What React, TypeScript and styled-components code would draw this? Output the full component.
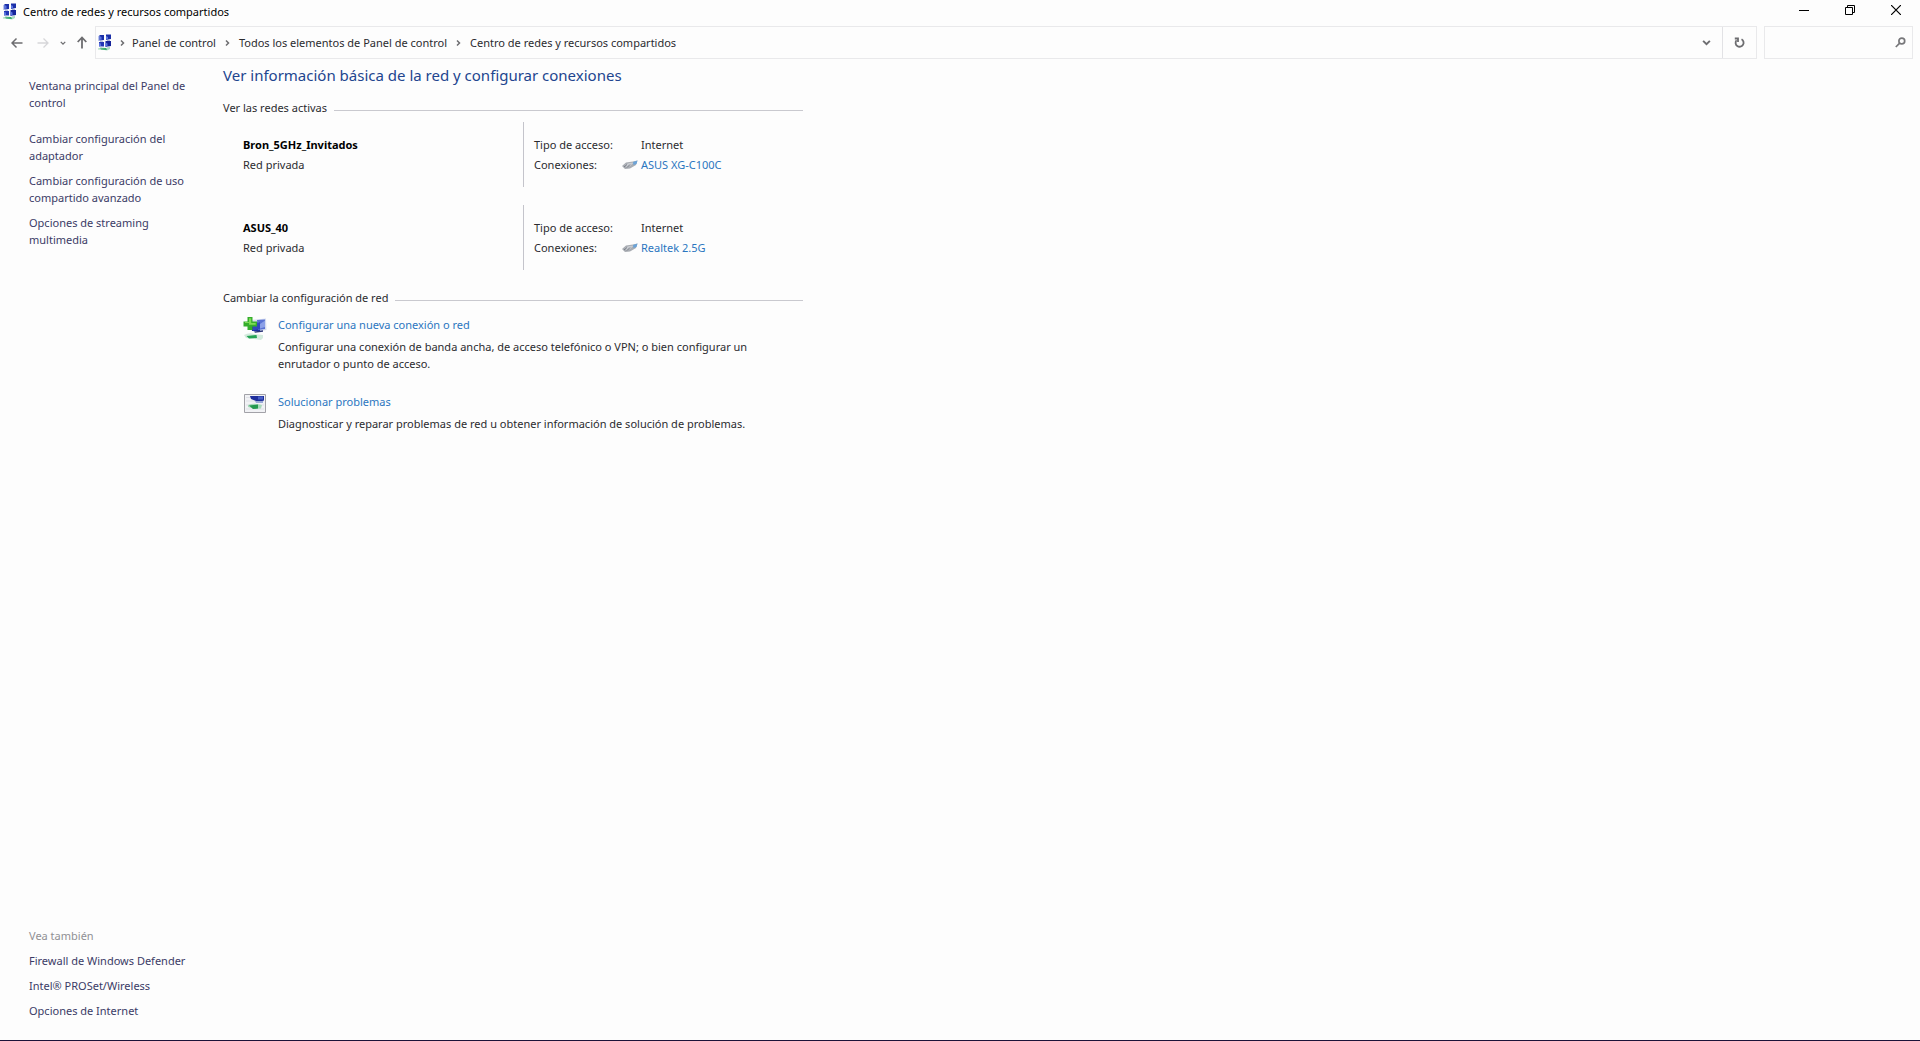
import React from "react";
import styled, { createGlobalStyle } from "styled-components";

const GlobalStyle = createGlobalStyle`
  * { box-sizing: border-box; }
  body {
    margin: 0;
    background: #fdfdfd;
    color: #2b2b2f;
    font: 11px/17px "Noto Sans", "Open Sans", sans-serif;
  }
  h1, h2, h3, p, ul, ol, dl, dd { margin: 0; padding: 0; }
  ul, ol { list-style: none; }
  svg { display: block; flex: none; }
`;

const Window = styled.div`
  display: flex;
  flex-direction: column;
  min-height: 100vh;
`;

const TitleBar = styled.header`
  display: flex;
  align-items: center;
  gap: 5px;
  height: 22px;
  padding: 0 1px 0 2px;
  color: #000;
`;

const Title = styled.span`
  flex: 1;
`;

const PlainButton = styled.button<{ $width: number; $color?: string }>`
  display: flex;
  align-items: center;
  justify-content: center;
  flex: none;
  width: ${(p) => p.$width}px;
  height: 100%;
  padding: 0;
  border: 0;
  background: none;
  color: ${(p) => p.$color ?? "#6d6d70"};
`;

const CaptionButtons = styled.div`
  display: flex;
  height: 20px;
  align-self: flex-start;
`;

const NavBar = styled.nav`
  display: flex;
  align-items: stretch;
  gap: 7px;
  height: 33px;
  margin-top: 4px;
  padding-right: 7px;
`;

const NavButtons = styled.div`
  display: flex;
  padding-left: 4px;
  width: 88px;
`;

const AddressBar = styled.div`
  display: flex;
  align-items: center;
  flex: 1;
  border: 1px solid #e9e9eb;
  padding-left: 1px;
`;

const Crumbs = styled.ol`
  display: flex;
  align-items: center;
  flex: 1;
`;

const Crumb = styled.li`
  display: flex;
  align-items: center;

  svg { margin: 0 8px; }
  &:first-child svg { margin: 0 6px; }
`;

const CrumbLink = styled.a`
  color: inherit;
  text-decoration: none;
`;

const RefreshSlot = styled.div`
  height: 100%;
  border-left: 1px solid #e2e2e5;
`;

const SearchBox = styled.label`
  display: flex;
  align-items: center;
  width: 149px;
  padding-right: 6px;
  border: 1px solid #e9e9eb;
  color: #77777a;
`;

const SearchInput = styled.input`
  flex: 1;
  min-width: 0;
  border: 0;
  outline: 0;
  background: none;
  font: inherit;
`;

const Body = styled.div`
  display: flex;
  flex: 1;
`;

const Sidebar = styled.aside`
  display: flex;
  flex-direction: column;
  justify-content: space-between;
  width: 223px;
  padding: 18px 26px 21px 29px;
`;

const SideHome = styled.div`
  margin-bottom: 19px;
`;

const SideList = styled.ul`
  display: flex;
  flex-direction: column;
  gap: 8px;
`;

const SideLink = styled.a`
  color: #3b3b66;
  text-decoration: none;
`;

const SeeAlsoTitle = styled.h2`
  margin-bottom: 8px;
  color: #909094;
  font: inherit;
`;

const Main = styled.main`
  width: 580px;
  padding-top: 4px;
`;

const PageTitle = styled.h1`
  color: #22458f;
  font-size: 15px;
  line-height: 24px;
  font-weight: 400;
`;

const Section = styled.section<{ $top: number }>`
  margin-top: ${(p) => p.$top}px;
`;

const SectionTitle = styled.h2`
  display: flex;
  align-items: center;
  gap: 7px;
  font: inherit;

  &::after {
    content: "";
    flex: 1;
    height: 1px;
    margin-top: 5px;
    background: #c9c9cf;
  }
`;

const Network = styled.article`
  display: flex;
  height: 65px;
  margin-top: 18px;
  padding-left: 20px;

  ${SectionTitle} + & { margin-top: 6px; }
`;

const NetworkInfo = styled.div`
  width: 280px;
  padding-top: 13px;
  line-height: 20px;
`;

const NetworkName = styled.h3`
  color: #000;
  font-size: 11px;
  line-height: 20px;
  font-weight: 700;
`;

const Details = styled.dl`
  display: grid;
  grid-template-columns: 88px 1fr;
  grid-auto-rows: 20px;
  padding: 13px 0 0 10px;
  border-left: 1px solid #c4c4cb;
  line-height: 20px;
`;

const Value = styled.dd`
  display: grid;
  grid-template-columns: 19px auto;
  align-items: center;

  > :last-child { grid-column: 2; }
`;

const TaskLink = styled.a`
  color: #2b76c0;
  text-decoration: none;
`;

const Task = styled.article<{ $top: number }>`
  display: flex;
  gap: 11px;
  margin-top: ${(p) => p.$top}px;
  padding-left: 20px;
`;

const TaskText = styled.div`
  display: flex;
  flex-direction: column;
  gap: 5px;
  max-width: 500px;
`;

const BottomEdge = styled.div`
  height: 1px;
  background: #1b1238;
`;

const NetworkIcon = () => (
  <svg width="16" height="17" viewBox="0 0 16 17" aria-hidden="true">
    <path d="M1 2 6 1v5l-5 1z" fill="#b9c4ee" />
    <path d="M2.500 1h4.500v5l-4.500.5z" fill="#1b2fa8" />
    <path d="M9 .5h5V5L9 6z" fill="#1b2fa8" />
    <path d="M2 8h5v4.500H2z" fill="#2336b4" />
    <path d="M8.500 7H14v5l-5.500 1z" fill="#16249a" />
    <path d="M2.500 2l2 1v3l-2-.5zM9 2l2 1v2.500H9zM2 9l2 .5V12H2zM8.500 8.500l2 1v3h-2z" fill="#5a74e0" />
    <path d="M3 7.300h3M10 6.500h3M3 13h2M10 13h3" stroke="#a9b4d6" />
    <path d="M1 14.500q4-1.500 8-.5l4-1v2l-3 1.500q-4-1-9-1z" fill="#a9dcc0" />
    <path d="M3 14.500l6-.5 1 2-6-.5z" fill="#2fa463" />
  </svg>
);

const BackIcon = () => (
  <svg width="12" height="12" viewBox="0 0 12 12" fill="none" stroke="currentColor" strokeWidth="1.500">
    <path d="M11.500 6H1.200M5.500 1.500 1 6l4.500 4.500" />
  </svg>
);

const ForwardIcon = () => (
  <svg width="12" height="12" viewBox="0 0 12 12" fill="none" stroke="currentColor" strokeWidth="1.300">
    <path d="M.5 6h10.300M6.500 1.500 11 6l-4.500 4.500" />
  </svg>
);

const UpIcon = () => (
  <svg width="12" height="13" viewBox="0 0 12 13" fill="none" stroke="currentColor" strokeWidth="1.800">
    <path d="M6 12.500V1.500M1.700 6 6 1.500 10.300 6" />
  </svg>
);

const ChevronDown = ({ size }: { size: number }) => (
  <svg width={size} height={size} viewBox="0 0 8 8" fill="none" stroke="currentColor" strokeWidth="1.700">
    <path d="M1 2.500 4 5.500 7 2.500" />
  </svg>
);

const CrumbArrow = () => (
  <svg width="7" height="8" viewBox="0 0 7 8" fill="none" stroke="#6d6d70" strokeWidth="1.500" aria-hidden="true">
    <path d="M2 1.500 4.500 4 2 6.500" />
  </svg>
);

const RefreshIcon = () => (
  <svg width="11" height="12" viewBox="0 0 11 12" fill="none" stroke="currentColor" strokeWidth="1.800">
    <path d="M7.500 2.200A4 4 0 1 1 2.500 3.200" />
    <path d="M.8 1.500H4V5" />
  </svg>
);

const SearchIcon = () => (
  <svg width="11" height="11" viewBox="0 0 11 11" fill="none" stroke="currentColor" strokeWidth="1.700" aria-hidden="true">
    <circle cx="6.800" cy="4" r="2.900" />
    <path d="M4.700 6.200.8 10" />
  </svg>
);

const MinimizeIcon = () => (
  <svg width="10" height="10" viewBox="0 0 10 10" stroke="currentColor">
    <path d="M0 5.500h10" />
  </svg>
);

const RestoreIcon = () => (
  <svg width="10" height="10" viewBox="0 0 10 10" fill="none" stroke="currentColor">
    <path d="M.5 2.500h7v7h-7zM2.500 2.500v-2h7v7h-2" />
  </svg>
);

const CloseIcon = () => (
  <svg width="10" height="10" viewBox="0 0 10 10" stroke="currentColor" strokeWidth="1.200">
    <path d="M0 0l10 10M10 0 0 10" />
  </svg>
);

const EthernetIcon = () => (
  <svg width="16" height="10" viewBox="0 0 16 10" aria-hidden="true">
    <path d="M0 6 4 2.500 11 1.500l4.500-1L14 5 8 8.500 3 9z" fill="#a9adb3" />
    <path d="M3 5l4-2 5-.5-4 3.500-4 1z" fill="#c9ccd1" />
    <path d="M2 7l3-2.500M5 7.500l3-3" stroke="#777c85" />
    <path d="M11 2l4.500-1.500-1 3.500-3 1z" fill="#6ba3d8" />
  </svg>
);

const NewConnectionIcon = () => (
  <svg width="24" height="25" viewBox="0 0 24 25" aria-hidden="true">
    <path d="M7 4 23 2.500l.5 11.500-13 2z" fill="#d4dbee" />
    <path d="M8 6h9v9H9z" fill="#1d2fa5" />
    <path d="M14 4 22 3.500V13L15 14z" fill="#5871d2" />
    <path d="M10 10l7-4v7l-7 1.500z" fill="#3148bd" />
    <path d="M17 8l5-3.500V11l-5 1.500z" fill="#8ba0e8" />
    <path d="M11 15.500l9-1.200v1.500l-8 1z" fill="#2b3578" />
    <path d="M1 19q5-3 10-1l9 1v3l-2 2q-7-1-15-2z" fill="#d3eadd" />
    <path d="M3.500 20l10-1 .5 3-8 .5z" fill="#25a354" />
    <path d="M4.500 1h5v4.500H14v5H9.500V14h-5v-3.500H.5v-5h4z" fill="#35ad2c" />
    <path d="M6 2.200h2.200V7h4.500v1.800H6V7H2V6h4z" fill="#7fdc55" />
  </svg>
);

const TroubleshootIcon = () => (
  <svg width="24" height="21" viewBox="0 0 24 21" aria-hidden="true">
    <path d="M1.500 1.500h21v18h-21z" fill="#f1f2f5" stroke="#a2a2a8" />
    <path d="M3 4.500h18M3 8h18M3 12h18M3 16h18" stroke="#dfe1e7" />
    <path d="M7 3h14v4.500l-5 1.500-8-3z" fill="#1f2f9c" />
    <path d="M15 3.500h5v3h-5z" fill="#4860c6" />
    <path d="M12 8h8v2h-7z" fill="#9aa9d6" />
    <path d="M5 12q5-2 9-1l5 1-1 3.500-6 .5-7-2z" fill="#a7d9ba" />
    <path d="M6 12.500l9-1v4l-5 .5z" fill="#24994f" />
  </svg>
);

const crumbs = ["Panel de control", "Todos los elementos de Panel de control", "Centro de redes y recursos compartidos"];

const sideTasks = [
  "Cambiar configuración del adaptador",
  "Cambiar configuración de uso compartido avanzado",
  "Opciones de streaming multimedia",
];

const seeAlso = ["Firewall de Windows Defender", "Intel® PROSet/Wireless", "Opciones de Internet"];

const networks = [
  { name: "Bron_5GHz_Invitados", kind: "Red privada", access: "Internet", adapter: "ASUS XG-C100C" },
  { name: "ASUS_40", kind: "Red privada", access: "Internet", adapter: "Realtek 2.5G" },
];

export default function App() {
  return (
    <Window>
      <GlobalStyle />
      <TitleBar>
        <NetworkIcon />
        <Title>Centro de redes y recursos compartidos</Title>
        <CaptionButtons>
          <PlainButton $width={46} $color="#000" aria-label="Minimizar"><MinimizeIcon /></PlainButton>
          <PlainButton $width={46} $color="#000" aria-label="Restaurar"><RestoreIcon /></PlainButton>
          <PlainButton $width={46} $color="#000" aria-label="Cerrar"><CloseIcon /></PlainButton>
        </CaptionButtons>
      </TitleBar>

      <NavBar>
        <NavButtons>
          <PlainButton $width={26} aria-label="Atrás"><BackIcon /></PlainButton>
          <PlainButton $width={26} $color="#d6d6d9" aria-label="Adelante"><ForwardIcon /></PlainButton>
          <PlainButton $width={14} aria-label="Ubicaciones recientes"><ChevronDown size={6} /></PlainButton>
          <PlainButton $width={24} aria-label="Subir"><UpIcon /></PlainButton>
        </NavButtons>
        <AddressBar>
          <NetworkIcon />
          <Crumbs>
            {crumbs.map((label) => (
              <Crumb key={label}>
                <CrumbArrow />
                <CrumbLink href="#">{label}</CrumbLink>
              </Crumb>
            ))}
          </Crumbs>
          <PlainButton $width={32} aria-label="Ubicaciones anteriores"><ChevronDown size={9} /></PlainButton>
          <RefreshSlot>
            <PlainButton $width={33} aria-label="Actualizar"><RefreshIcon /></PlainButton>
          </RefreshSlot>
        </AddressBar>
        <SearchBox>
          <SearchInput type="text" aria-label="Buscar" />
          <SearchIcon />
        </SearchBox>
      </NavBar>

      <Body>
        <Sidebar>
          <div>
            <SideHome><SideLink href="#">Ventana principal del Panel de control</SideLink></SideHome>
            <SideList>
              {sideTasks.map((label) => (
                <li key={label}><SideLink href="#">{label}</SideLink></li>
              ))}
            </SideList>
          </div>
          <div>
            <SeeAlsoTitle>Vea también</SeeAlsoTitle>
            <SideList>
              {seeAlso.map((label) => (
                <li key={label}><SideLink href="#">{label}</SideLink></li>
              ))}
            </SideList>
          </div>
        </Sidebar>

        <Main>
          <PageTitle>Ver información básica de la red y configurar conexiones</PageTitle>

          <Section $top={12}>
            <SectionTitle>Ver las redes activas</SectionTitle>
            {networks.map((n) => (
              <Network key={n.name}>
                <NetworkInfo>
                  <NetworkName>{n.name}</NetworkName>
                  <p>{n.kind}</p>
                </NetworkInfo>
                <Details>
                  <dt>Tipo de acceso:</dt>
                  <Value><span>{n.access}</span></Value>
                  <dt>Conexiones:</dt>
                  <Value><EthernetIcon /><TaskLink href="#">{n.adapter}</TaskLink></Value>
                </Details>
              </Network>
            ))}
          </Section>

          <Section $top={19}>
            <SectionTitle>Cambiar la configuración de red</SectionTitle>
            <Task $top={10}>
              <NewConnectionIcon />
              <TaskText>
                <TaskLink href="#">Configurar una nueva conexión o red</TaskLink>
                <p>
                  Configurar una conexión de banda ancha, de acceso telefónico o VPN; o bien configurar un
                  enrutador o punto de acceso.
                </p>
              </TaskText>
            </Task>
            <Task $top={21}>
              <TroubleshootIcon />
              <TaskText>
                <TaskLink href="#">Solucionar problemas</TaskLink>
                <p>Diagnosticar y reparar problemas de red u obtener información de solución de problemas.</p>
              </TaskText>
            </Task>
          </Section>
        </Main>
      </Body>
      <BottomEdge />
    </Window>
  );
}
